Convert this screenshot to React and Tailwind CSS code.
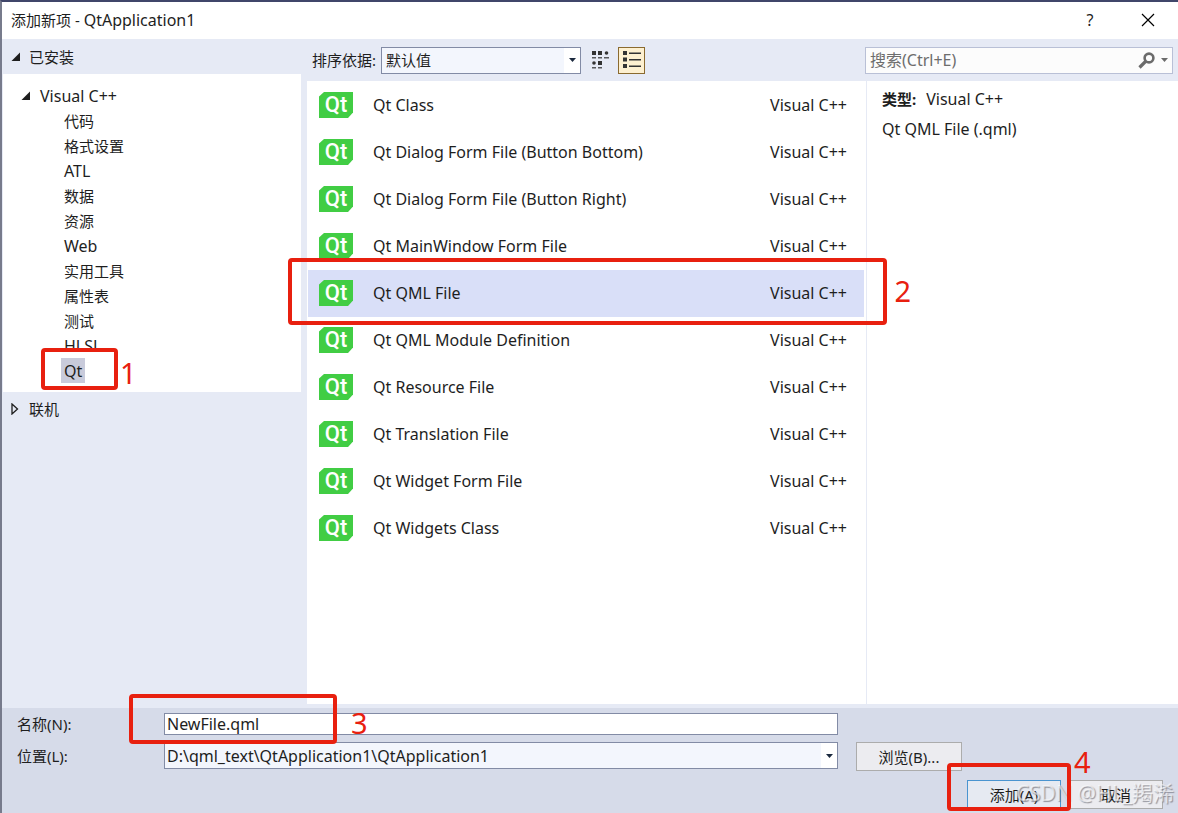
import { useState } from "react";

const categories = [
  { name: "代码" },
  { name: "格式设置" },
  { name: "ATL", latin: true },
  { name: "数据" },
  { name: "资源" },
  { name: "Web", latin: true },
  { name: "实用工具" },
  { name: "属性表" },
  { name: "测试" },
  { name: "HLSL", latin: true },
  { name: "Qt", latin: true },
];

const templates = [
  "Qt Class",
  "Qt Dialog Form File (Button Bottom)",
  "Qt Dialog Form File (Button Right)",
  "Qt MainWindow Form File",
  "Qt QML File",
  "Qt QML Module Definition",
  "Qt Resource File",
  "Qt Translation File",
  "Qt Widget Form File",
  "Qt Widgets Class",
];

function QtLogo() {
  return (
    <span className="relative flex h-[26px] w-[34px] shrink-0 items-center justify-center" aria-hidden="true">
      <svg className="absolute inset-0" width="34" height="26" viewBox="0 0 34 26">
        <path d="M5 0H34V20.5L29 26H0V4.5Z" fill="#41cd44" />
      </svg>
      <span className="relative font-[Roboto,sans-serif] text-[22px] leading-6 font-medium text-white">Qt</span>
    </span>
  );
}

function Expanded() {
  return (
    <svg width="10" height="10" viewBox="0 0 10 10" aria-hidden="true">
      <path d="M9 0.5V9H0.5Z" fill="#1e1e1e" />
    </svg>
  );
}

function DownArrow({ className }) {
  return (
    <svg className={className} width="7" height="4" viewBox="0 0 7 4" aria-hidden="true">
      <path d="M0 0H7L3.5 4Z" fill="currentColor" />
    </svg>
  );
}

function Callout({ box, label, number }) {
  return (
    <>
      <span className={`pointer-events-none absolute z-10 rounded-[4px] border-4 border-[#e8200f] ${box}`} />
      <span className={`pointer-events-none absolute z-10 text-[29px] leading-8 text-[#e8200f] ${label}`}>{number}</span>
    </>
  );
}

function TitleBar() {
  return (
    <header className="flex h-[37px] items-center bg-white pr-5 pb-px pl-[9px]">
      <h1 className="flex-1 text-[15px]">
        添加新项 - <span className="text-[16px]">QtApplication1</span>
      </h1>
      <button aria-label="帮助" className="mr-10 w-4 text-[16px] leading-5">?</button>
      <button aria-label="关闭" className="flex w-5 justify-center">
        <svg width="14" height="14" viewBox="0 0 14 14" aria-hidden="true">
          <path d="M1 1L13 13M13 1L1 13" stroke="#000" strokeWidth="1.2" />
        </svg>
      </button>
    </header>
  );
}

function Sidebar({ selected, onSelect }) {
  return (
    <nav className="w-[305px] shrink-0 pr-[6px] pl-px">
      <button className="flex h-[35px] w-full items-center gap-2 pl-2">
        <Expanded />
        已安装
      </button>
      <div className="bg-white py-[9px]">
        <button className="flex h-[25px] items-center gap-[9px] pl-[18px] text-[16px]">
          <Expanded />
          Visual C++
        </button>
        <ul className="pl-[58px]">
          {categories.map(({ name, latin }) => (
            <li key={name} className="relative h-[25px]">
              <button
                onClick={() => onSelect(name)}
                className={`block h-[25px] px-[3px] ${latin ? "text-[16px]" : ""} ${name === selected ? "bg-[#c9cbdb]" : ""}`}
              >
                {name}
              </button>
              {name === "Qt" && (
                <Callout number="1" box="-left-5 -top-[10px] h-[42px] w-[77px]" label="left-[59px] -top-px" />
              )}
            </li>
          ))}
        </ul>
      </div>
      <button className="flex h-[33px] items-center gap-2.5 pl-2">
        <svg width="8" height="12" viewBox="0 0 8 12" aria-hidden="true">
          <path d="M1 1L6.5 6L1 11Z" fill="none" stroke="#1e1e1e" strokeWidth="1.3" />
        </svg>
        联机
      </button>
    </nav>
  );
}

function Toolbar() {
  return (
    <div className="flex h-[42px] items-center pr-[5px] pl-[5px]">
      <label htmlFor="sort" className="w-[69px] whitespace-nowrap">排序依据:</label>
      <div className="relative w-[200px]">
        <select id="sort" className="block h-[27px] w-full appearance-none border border-[#828ba5] bg-[#f3f6fd] px-1">
          <option>默认值</option>
        </select>
        <span className="pointer-events-none absolute top-px right-px flex h-[25px] w-4 items-center justify-center bg-white">
          <DownArrow className="text-[#1b293e]" />
        </span>
      </div>
      <button aria-label="小图标" className="ml-[6px] flex h-[27px] w-[27px] items-center justify-center">
        <svg width="17" height="18" viewBox="0 0 17 18" fill="#333" aria-hidden="true">
          <path d="M0 0H4V4H0ZM6 0H10V4H6ZM6 10H10V14H6Z" />
          <circle cx="14.5" cy="2" r="1.8" />
          <circle cx="2" cy="12" r="1.8" />
          <path d="M0 6H4V7.5H0ZM6 6H10V7.5H6ZM12 6H17V7.5H12ZM0 16H4V17.5H0ZM6 16H10V17.5H6Z" opacity="0.8" />
        </svg>
      </button>
      <button aria-label="列表" aria-pressed="true" className="ml-1 flex h-[27px] w-[27px] items-center justify-center border border-[#8a6a2f] bg-[#fdf0d0]">
        <svg width="18" height="18" viewBox="0 0 18 18" fill="#333" aria-hidden="true">
          <path d="M0 0H4V4H0ZM0 6.5H4V10.5H0ZM0 13H4V17H0ZM6 1.5H18V3H6ZM6 8H18V9.5H6ZM6 14.5H18V16H6Z" />
        </svg>
      </button>
      <div className="ml-auto flex h-[27px] w-[308px] items-center border border-[#b9c0d6] bg-[#fcfcfc] pr-1">
        <input aria-label="搜索" placeholder="搜索(Ctrl+E)" className="min-w-0 flex-1 bg-transparent pl-1 text-[16px] outline-none placeholder:text-[#6d6d6d]" />
        <button aria-label="搜索" className="mr-[6px]">
          <svg width="17" height="17" viewBox="0 0 17 17" fill="none" stroke="#6b6b6b" aria-hidden="true">
            <circle cx="11" cy="6" r="4.4" strokeWidth="2.6" />
            <path d="M8 9L1.5 15.5" strokeWidth="3.2" />
          </svg>
        </button>
        <button aria-label="搜索选项">
          <DownArrow className="text-[#6b6b6b]" />
        </button>
      </div>
    </div>
  );
}

function TemplateList({ selected, onSelect }) {
  return (
    <ul className="min-w-0 flex-1 bg-white py-px pr-0.5 pl-px text-[16px]">
      {templates.map((name) => (
        <li key={name} className="relative">
          <button
            onClick={() => onSelect(name)}
            className={`flex h-[47px] w-full items-center pr-[17px] pb-px pl-[11px] text-left ${name === selected ? "bg-[#d9dff8]" : ""}`}
          >
            <QtLogo />
            <span className="ml-5 flex-1">{name}</span>
            <span>Visual C++</span>
          </button>
          {name === "Qt QML File" && (
            <Callout number="2" box="-left-5 -right-[23px] -top-3 h-[67px]" label="-right-[47px] top-[5px]" />
          )}
        </li>
      ))}
    </ul>
  );
}

function Footer() {
  return (
    <footer className="flex flex-col gap-[9px] border-t-4 border-[#e6eaf5] bg-[#d6dbe9] pt-[5px] pr-[15px] pb-1 pl-[15px]">
      <div className="grid grid-cols-[147px_minmax(0,674px)_auto] items-start gap-y-[7px]">
        <label htmlFor="name" className="leading-[22px]">名称(N):</label>
        <div className="relative">
          <input id="name" defaultValue="NewFile.qml" className="block h-[22px] w-full border border-[#828ba5] bg-white px-[2px] text-[16px] outline-none" />
          <Callout number="3" box="-left-[35px] -top-[19px] h-[50px] w-[208px]" label="left-[187px] -top-[6px]" />
        </div>
        <span />
        <label htmlFor="location" className="leading-[28px]">位置(L):</label>
        <div className="relative">
          <select id="location" className="block h-[27px] w-full appearance-none border border-[#828ba5] bg-[#f3f6fd] px-[2px] text-[16px]">
            <option>D:\qml_text\QtApplication1\QtApplication1</option>
          </select>
          <span className="pointer-events-none absolute top-px right-px flex h-[25px] w-4 items-center justify-center bg-white">
            <DownArrow className="text-[#1b293e]" />
          </span>
        </div>
        <button className="ml-[18px] h-[29px] w-[106px] border border-[#acacac] bg-[#ececf0]">浏览(B)...</button>
      </div>
      <div className="relative flex justify-end gap-2">
        <div className="relative">
          <button className="h-[29px] w-[94px] border border-[#4a94d0] bg-[#e6eaf2]">添加(A)</button>
          <Callout number="4" box="-left-5 -top-[17px] h-[48px] w-[124px]" label="left-[107px] -top-[34px]" />
        </div>
        <button className="h-[29px] w-[94px] border border-[#acacac] bg-[#ececf0]">取消</button>
        <span className="pointer-events-none absolute -right-[11px] top-0 text-[21px] leading-[27px] whitespace-nowrap text-white/60 [text-shadow:1px_1px_1px_rgba(90,90,100,0.6)]">
          CSDN @HL_羯浠
        </span>
      </div>
    </footer>
  );
}

export default function App() {
  const [category, setCategory] = useState("Qt");
  const [template, setTemplate] = useState("Qt QML File");
  return (
    <div className="flex min-h-screen flex-col overflow-hidden border-t-2 border-l-2 border-t-[#40466a] border-l-[#777b8c] bg-[#e6eaf5] font-['Noto_Sans','Noto_Sans_CJK_SC',sans-serif] text-[15px] leading-5 text-[#1e1e1e]">
      <TitleBar />
      <main className="flex flex-1">
        <Sidebar selected={category} onSelect={setCategory} />
        <div className="flex min-w-0 flex-1 flex-col">
          <Toolbar />
          <div className="flex flex-1">
            <TemplateList selected={template} onSelect={setTemplate} />
            <section className="w-[312px] shrink-0 border-l border-[#e6eaf5] bg-white px-[15px] pt-2 text-[16px]">
              <p className="mb-2.5"><strong className="mr-2.5 text-[15px]">类型:</strong>Visual C++</p>
              <p>Qt QML File (.qml)</p>
            </section>
          </div>
        </div>
      </main>
      <Footer />
    </div>
  );
}
